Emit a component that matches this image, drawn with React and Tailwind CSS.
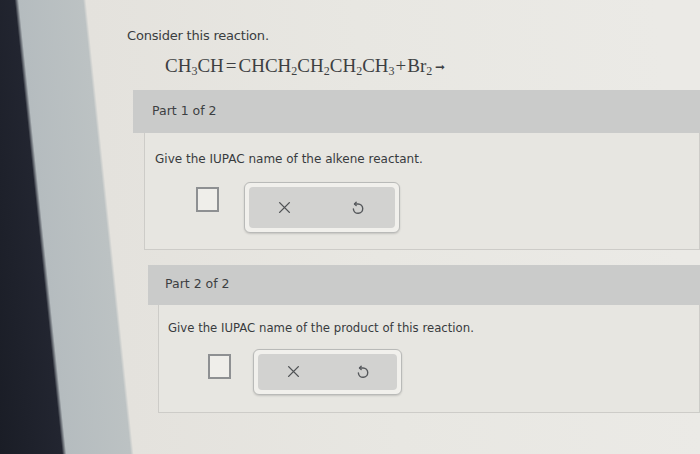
function UndoIcon() {
  return (
    <svg width="15" height="15" viewBox="0 0 16 16" fill="none" stroke="#55585b" strokeWidth="1.5" strokeLinecap="round" strokeLinejoin="round">
      <path d="M5 4.2 H8.6 A5 5 0 1 1 3.6 9.6" />
      <path d="M6.6 2.4 L4.8 4.2 L6.6 6" />
    </svg>
  )
}

function XIcon() {
  return (
    <svg width="13" height="13" viewBox="0 0 12 12" fill="none" stroke="#505355" strokeWidth="1.3" strokeLinecap="round">
      <path d="M1.5 1.5 L10.5 10.5 M10.5 1.5 L1.5 10.5" />
    </svg>
  )
}

function Part({ label, question, className, headH, headPl, bodyMl, bodyH, textPt, textPl, textSize, rowMt, rowPl, rowGap, btnW, btnH }) {
  return (
    <div className={className}>
      <div className={`${headH} ${headPl} bg-[#cacbca] flex items-center text-[12.5px] text-[#3c3f42]`}>
        {label}
      </div>
      <div className={`${bodyMl} ${bodyH} border border-t-0 border-[#cdccc8] bg-[#e7e6e1]`}>
        <p className={`${textPt} ${textPl} ${textSize} leading-[17px] text-[#383b3e]`}>{question}</p>
        <div className={`flex items-start ${rowMt} ${rowPl} ${rowGap}`}>
          <div className="mt-[5px] w-[23px] h-[25px] border-2 border-[#8e9092] bg-[#efeeea]" />
          <div className={`${btnW} ${btnH} rounded-md border border-[#b9bab8] bg-[#f1f0ec] p-[4px] shadow-[0_1px_2px_rgba(0,0,0,0.15)]`}>
            <div className="h-full rounded bg-[#d2d2d0] flex items-center">
              <div className="w-[70px] flex justify-center"><XIcon /></div>
              <div className="flex-1 flex justify-center"><UndoIcon /></div>
            </div>
          </div>
        </div>
      </div>
    </div>
  )
}

export default function App() {
  return (
    <div className="h-[454px] w-[700px] overflow-hidden font-['DejaVu_Sans',sans-serif] bg-[linear-gradient(84deg,#1a1d26_0px,#222530_62px,#b5bcbf_66px,#bcc2c3_130px,#e4e2dd_133px,#e8e7e2_400px,#ebeae6_700px)]">
      <div className="pl-[127px] pt-[26px]">
        <p className="text-[13px] text-[#3a3d40] tracking-[-0.2px]">Consider this reaction.</p>
        <p className="ml-[38px] mt-[10px] font-['Liberation_Serif',serif] text-[19px] text-[#3d3f42] leading-none">
          CH<sub className="text-[12px]">3</sub>CH<span className="mx-[2px]">=</span>CHCH<sub className="text-[12px]">2</sub>CH<sub className="text-[12px]">2</sub>CH<sub className="text-[12px]">2</sub>CH<sub className="text-[12px]">3</sub>
          <span className="mx-[1px]">+</span>Br<sub className="text-[12px]">2</sub>
          <span className="ml-[3px] text-[12px] align-middle">➞</span>
        </p>
      </div>
      <Part
        className="ml-[133px] mt-[15px]"
        label="Part 1 of 2"
        question="Give the IUPAC name of the alkene reactant."
        headH="h-[43px]"
        headPl="pl-[19px]"
        bodyMl="ml-[11px]"
        bodyH="h-[117px]"
        textPt="pt-[18px]"
        textPl="pl-[10px]"
        textSize="text-[12px]"
        rowMt="mt-[14px]"
        rowPl="pl-[51px]"
        rowGap="gap-[25px]"
        btnW="w-[156px]"
        btnH="h-[51px]"
      />
      <Part
        className="ml-[148px] mt-[15px]"
        label="Part 2 of 2"
        question="Give the IUPAC name of the product of this reaction."
        headH="h-[40px]"
        headPl="pl-[17px]"
        bodyMl="ml-[10px]"
        bodyH="h-[108px]"
        textPt="pt-[15px]"
        textPl="pl-[9px]"
        textSize="text-[11.7px]"
        rowMt="mt-[12px]"
        rowPl="pl-[49px]"
        rowGap="gap-[22px]"
        btnW="w-[149px]"
        btnH="h-[46px]"
      />
    </div>
  )
}
